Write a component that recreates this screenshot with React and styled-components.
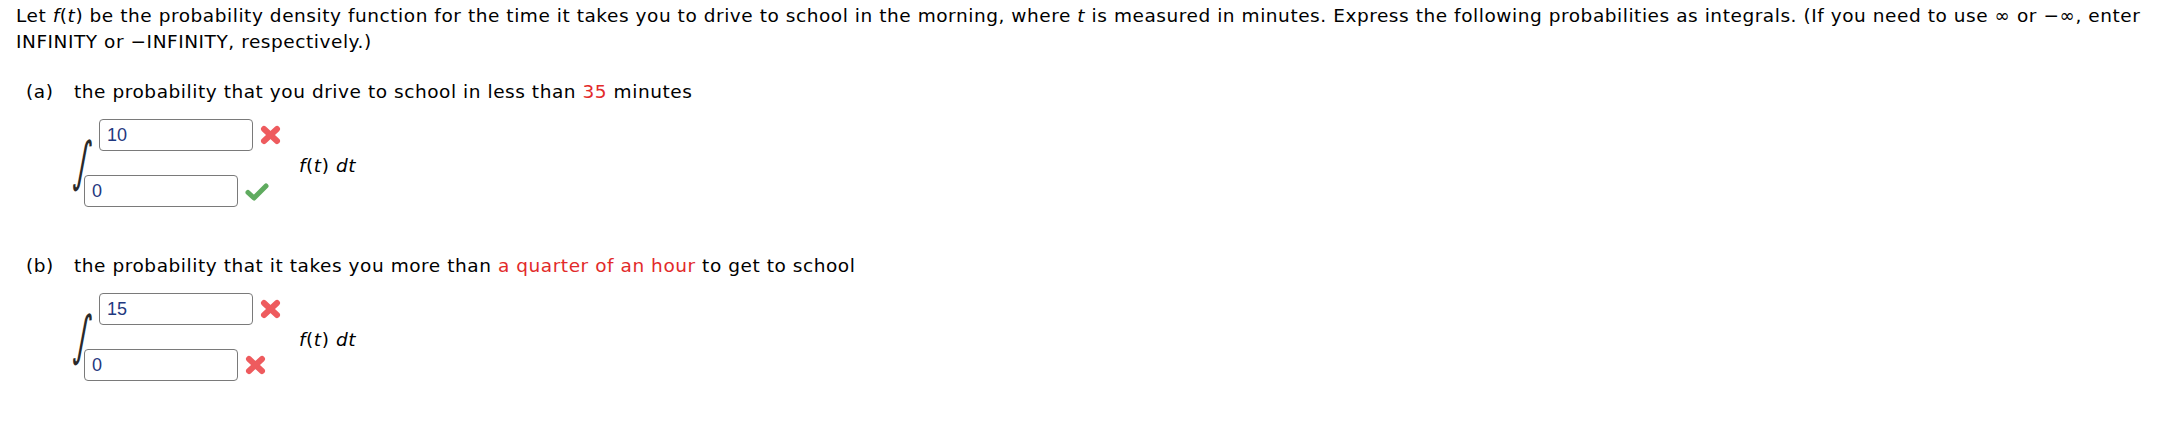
import React from "react";
import styled, { createGlobalStyle } from "styled-components";

const Global = createGlobalStyle`
  html, body { margin: 0; padding: 0; background: #fff; }
  body { font-family: "DejaVu Sans", Verdana, sans-serif; color: #000; }
`;

const Page = styled.div`
  padding: 3px 0 0 16px;
  font-size: 18.5px;
  line-height: 26px;
  letter-spacing: 0.55px;
`;

const Intro = styled.p`
  margin: 0;
  white-space: nowrap;
`;

const Part = styled.section`
  margin-top: ${(p) => p.$top}px;
`;

const PartLine = styled.div`
  display: flex;
  padding-left: 10px;
  white-space: nowrap;
`;

const PartLabel = styled.span`
  width: 48px;
  flex: none;
`;

const Hi = styled.span`
  color: #e22a2a;
`;

const Integral = styled.div`
  display: flex;
  align-items: center;
  margin: 14px 0 0 57px;
`;

const Sign = styled.span`
  width: 20px;
  height: 56px;
  display: flex;
  align-items: center;
  justify-content: center;
  font-family: "DejaVu Sans", sans-serif;
  font-size: 30px;
  line-height: 1;
  letter-spacing: 0;
  transform: translateY(-1px) scaleY(1.8) skewX(-16deg);
  color: #2a2a2a;
`;

const Limits = styled.div`
  display: flex;
  flex-direction: column;
  gap: 24px;
  margin-left: -9px;
`;

const LimitRow = styled.div`
  display: flex;
  align-items: center;
  gap: 7px;
  padding-left: ${(p) => (p.$upper ? 15 : 0)}px;
`;

const Field = styled.div`
  box-sizing: border-box;
  width: 154px;
  height: 32px;
  border: 1px solid #7a7a7a;
  border-radius: 4px;
  padding: 0 7px;
  display: flex;
  align-items: center;
  font-family: "Liberation Sans", Arial, sans-serif;
  font-size: 18px;
  letter-spacing: 0;
  color: #1f3880;
  background: #fff;
`;

const Integrand = styled.span`
  margin-left: 18px;
  padding-top: 5px;
  white-space: nowrap;
`;

const Mark = styled.svg`
  flex: none;
  display: block;
`;

const Cross = () => (
  <Mark width="21" height="20" viewBox="0 0 21 20">
    <g stroke="#ee5b5e" strokeWidth="6" strokeLinecap="round">
      <line x1="4" y1="4" x2="17" y2="16" />
      <line x1="17" y1="4" x2="4" y2="16" />
    </g>
  </Mark>
);

const Check = () => (
  <Mark width="24" height="19" viewBox="0 0 24 19">
    <path
      d="M3 10.5 L9 16 L21 4"
      fill="none"
      stroke="#5fab5f"
      strokeWidth="5"
      strokeLinecap="round"
      strokeLinejoin="round"
    />
  </Mark>
);

const Limit = ({ upper, value, ok }) => (
  <LimitRow $upper={upper}>
    <Field>{value}</Field>
    {ok ? <Check /> : <Cross />}
  </LimitRow>
);

const IntegralBlock = ({ upper, lower }) => (
  <Integral>
    <Sign>∫</Sign>
    <Limits>
      <Limit upper value={upper.v} ok={upper.ok} />
      <Limit value={lower.v} ok={lower.ok} />
    </Limits>
    <Integrand>
      <i>f</i>(<i>t</i>) <i>dt</i>
    </Integrand>
  </Integral>
);

export default function App() {
  return (
    <>
      <Global />
      <Page>
        <Intro>
          Let <i>f</i>(<i>t</i>) be the probability density function for the time it takes you to drive
          to school in the morning, where <i>t</i> is measured in minutes. Express the following
          probabilities as integrals. (If you need to use ∞ or −∞, enter
          <br />
          INFINITY or −INFINITY, respectively.)
        </Intro>
        <Part $top={24}>
          <PartLine>
            <PartLabel>(a)</PartLabel>
            <span>
              the probability that you drive to school in less than <Hi>35</Hi> minutes
            </span>
          </PartLine>
          <IntegralBlock upper={{ v: "10", ok: false }} lower={{ v: "0", ok: true }} />
        </Part>
        <Part $top={46}>
          <PartLine>
            <PartLabel>(b)</PartLabel>
            <span>
              the probability that it takes you more than <Hi>a quarter of an hour</Hi> to get to
              school
            </span>
          </PartLine>
          <IntegralBlock upper={{ v: "15", ok: false }} lower={{ v: "0", ok: false }} />
        </Part>
      </Page>
    </>
  );
}
